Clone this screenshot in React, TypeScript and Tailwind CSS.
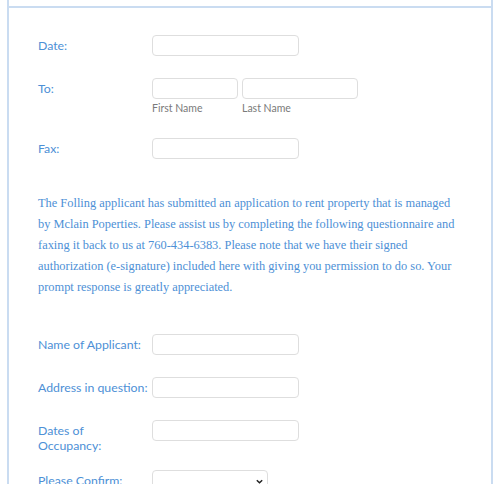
import * as React from "react"

const label = "text-[12.3px] text-[#4d90d6] leading-[21px] w-[114px] shrink-0 whitespace-nowrap"
const input = "h-[21px] rounded-[4px] border border-[#dedede] bg-white"

function Row({ name, width = "w-[147px]", className = "mb-[22px]" }: { name: string; width?: string; className?: string }) {
  return (
    <div className={"flex items-start " + className}>
      <div className={label}>{name}</div>
      <div className={input + " " + width} />
    </div>
  )
}

const lines = [
  "The Folling applicant has submitted an application to rent property that is managed",
  "by Mclain Poperties. Please assist us by completing the following questionnaire and",
  "faxing it back to us at 760-434-6383. Please note that we have their signed",
  "authorization (e-signature) included here with giving you permission to do so. Your",
  "prompt response is greatly appreciated.",
]

export default function App() {
  return (
    <div className="h-[484px] bg-white overflow-hidden" style={{ fontFamily: "Lato, 'Noto Sans', sans-serif" }}>
      <div className="ml-[7px] w-[486px] border-x-2 border-[#cadcf1] min-h-[484px]">
        <div className="h-[6px]" />
        <div className="border-t-2 border-[#cadcf1] px-[29px] pt-[27px]">
          <Row name="Date:" />

          {/* To: first / last */}
          <div className="flex items-start mb-[22px]">
            <div className={label}>To:</div>
            <div className="flex gap-[4px]">
              <div className="flex flex-col">
                <div className={input + " w-[86px]"} />
                <span className="text-[10.5px] text-[#7a7a7a] leading-[16px] mt-[1px]">First Name</span>
              </div>
              <div className="flex flex-col">
                <div className={input + " w-[116px]"} />
                <span className="text-[10.5px] text-[#7a7a7a] leading-[16px] mt-[1px]">Last Name</span>
              </div>
            </div>
          </div>

          <Row name="Fax:" className="mb-[34px]" />

          <p
            className="text-[12.4px] leading-[21px] text-[#4d90d6] mb-[36px]"
            style={{ fontFamily: "'Liberation Serif', serif" }}
          >
            {lines.map((l) => (
              <span key={l} className="block whitespace-nowrap">
                {l}
              </span>
            ))}
          </p>

          <Row name="Name of Applicant:" />
          <Row name="Address in question:" />

          <div className="flex items-start mb-[17px]">
            <div className="text-[12.3px] text-[#4d90d6] leading-[15px] pt-[3px] w-[114px] shrink-0">
              Dates of
              <br />
              Occupancy:
            </div>
            <div className={input + " w-[147px]"} />
          </div>

          <div className="flex items-start">
            <div className={label}>Please Confirm:</div>
            <div className={input + " w-[116px] relative"}>
              <svg className="absolute right-[3px] top-[6px]" width="9" height="9" viewBox="0 0 10 10" fill="none">
                <path d="M2 3.5 5 6.5 8 3.5" stroke="#222" strokeWidth="1.6" />
              </svg>
            </div>
          </div>
        </div>
      </div>
    </div>
  )
}
